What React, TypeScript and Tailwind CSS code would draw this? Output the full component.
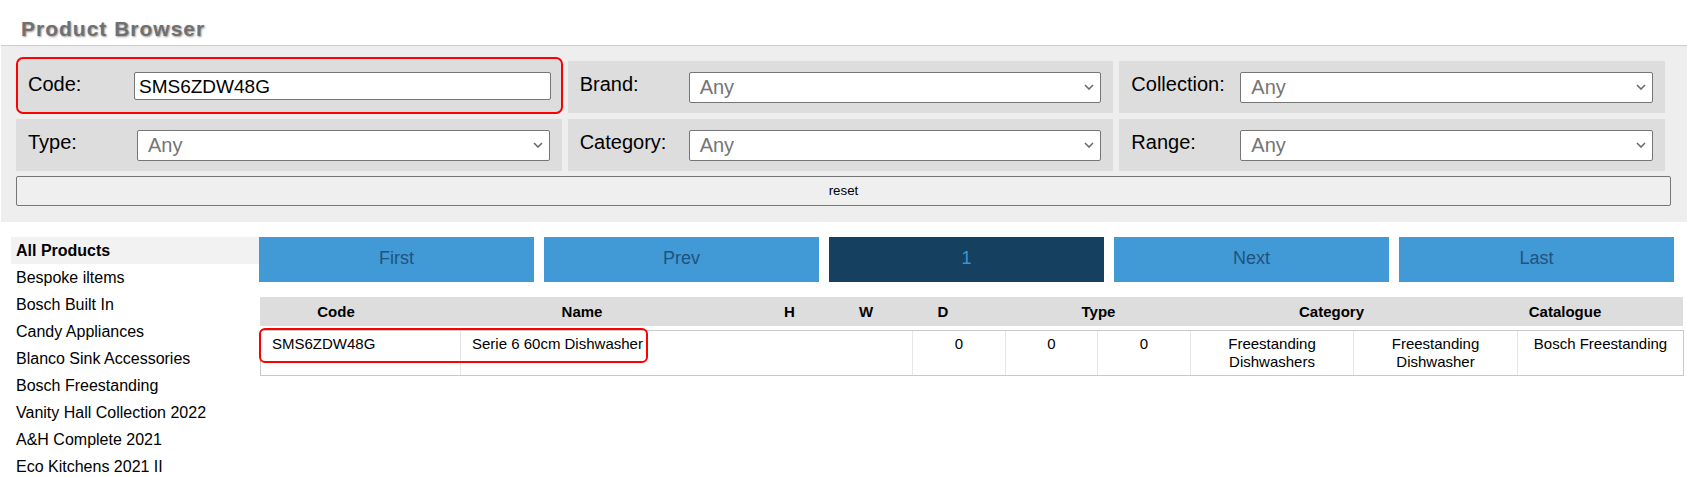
import React from "react";

const font = { fontFamily: '"Liberation Sans", Arial, sans-serif' };

function Chevron() {
  return (
    <svg width="10" height="6" viewBox="0 0 10 6" className="absolute right-[6px] top-1/2 -translate-y-1/2">
      <path d="M1 1 L5 5 L9 1" fill="none" stroke="#6b6b6b" strokeWidth="1.6" />
    </svg>
  );
}

function FakeSelect() {
  return (
    <div className="relative flex-1 h-[31px] bg-white border border-[#767676] rounded-[2px] flex items-center pl-[10px] text-[20px] text-[#757575] leading-none">
      Any
      <Chevron />
    </div>
  );
}

function SelectCell({ label }: { label: string }) {
  return (
    <div className="bg-[#dddddd] h-[52px] flex items-center pl-[12px] pr-[12px]">
      <div className="w-[109px] shrink-0 text-[20px] text-black pb-[7px] leading-[24px]">{label}</div>
      <FakeSelect />
    </div>
  );
}

const sidebar = [
  "All Products",
  "Bespoke iltems",
  "Bosch Built In",
  "Candy Appliances",
  "Blanco Sink Accessories",
  "Bosch Freestanding",
  "Vanity Hall Collection 2022",
  "A&H Complete 2021",
  "Eco Kitchens 2021 II",
];

const headers = ["Code", "Name", "H", "W", "D", "Type", "Category", "Catalogue"];

export default function App() {
  return (
    <div style={font} className="w-[1687px] h-[477px] overflow-hidden bg-white text-black">
      <div className="h-[45px] pl-[21px] pt-[17px]">
        <div
          className="text-[21px] leading-[24px] font-bold text-[#707070] tracking-[1px]"
          style={{ textShadow: "1px 1px 2px #9a9a9a" }}
        >
          Product Browser
        </div>
      </div>

      <div className="ml-[1px] border-t border-[#cccccc] bg-[#eeeeee] h-[177px] pt-[15px] pl-[15px] pr-[16px]">
        <div className="grid grid-cols-3 gap-[6px] mr-[6px]">
          <div className="relative h-[52px] flex items-center pl-[12px] pr-[11px]">
            <div className="absolute -top-[4px] -bottom-[1px] left-0 right-[-1px] rounded-[7px] border-2 border-[#ff0000] bg-[#dddddd]" />
            <div className="relative w-[106px] shrink-0 text-[20px] text-black pb-[7px] leading-[24px]">Code:</div>
            <div className="relative flex-1 self-start mt-[11px] h-[28px] bg-white border border-[#767676] rounded-[2px] flex items-center pl-[4px] text-[19px] leading-none text-black">
              SMS6ZDW48G
            </div>
          </div>
          <SelectCell label="Brand:" />
          <SelectCell label="Collection:" />
          <SelectCell label="Type:" />
          <SelectCell label="Category:" />
          <SelectCell label="Range:" />
        </div>
        <div className="mt-[5px] h-[30px] bg-[#efefef] border border-[#767676] rounded-[2px] flex items-center justify-center text-[13.33px] text-black">
          reset
        </div>
      </div>

      <div className="flex pt-[15px]">
        <div className="ml-[11px] w-[248px] shrink-0">
          {sidebar.map((s, i) => (
            <div
              key={s}
              className={
                "h-[27px] leading-[27px] px-[5px] text-[16px] whitespace-nowrap " +
                (i === 0 ? "bg-[#f2f2f2] font-bold" : "")
              }
            >
              {s}
            </div>
          ))}
        </div>

        <div className="w-[1425px] shrink-0">
          <div className="flex">
            {["First", "Prev", "1", "Next", "Last"].map((p) => (
              <div
                key={p}
                className={
                  "flex-1 mr-[10px] h-[45px] flex items-center justify-center text-[18px] pb-[3px] " +
                  (p === "1" ? "bg-[#15405f] text-[#3b94d2]" : "bg-[#4199d5] text-[#1f5380]")
                }
              >
                {p}
              </div>
            ))}
          </div>

          <div className="relative ml-[1px] mt-[15px]">
            <div className="grid grid-cols-[152px_340px_75px_78px_76px_235px_231px_1fr] bg-[#dddddd] h-[29px] items-center mr-[1px]">
              {headers.map((h) => (
                <div key={h} className="text-center font-bold text-[15px] leading-[18px]">
                  {h}
                </div>
              ))}
            </div>
            <div className="mt-[4px] border border-[#c8c8c8] grid grid-cols-[199px_452px_93px_92px_93px_163px_164px_1fr] text-[15px] leading-[18px]">
              <div className="pl-[11px] pt-[4px] pb-[4px] h-[44px]">SMS6ZDW48G</div>
              <div className="border-l border-[#e6e6e6] pl-[11px] pt-[4px]">Serie 6 60cm Dishwasher</div>
              <div className="border-l border-[#e6e6e6] text-center pt-[4px]">0</div>
              <div className="border-l border-[#e6e6e6] text-center pt-[4px]">0</div>
              <div className="border-l border-[#e6e6e6] text-center pt-[4px]">0</div>
              <div className="border-l border-[#e6e6e6] text-center pt-[4px]">
                Freestanding
                <br />
                Dishwashers
              </div>
              <div className="border-l border-[#e6e6e6] text-center pt-[4px]">
                Freestanding
                <br />
                Dishwasher
              </div>
              <div className="border-l border-[#e6e6e6] text-center pt-[4px]">Bosch Freestanding</div>
            </div>
            <div className="absolute left-[-1px] top-[31px] w-[389px] h-[35px] rounded-[6px] border-2 border-[#ff0000]" />
          </div>
        </div>
      </div>
    </div>
  );
}
